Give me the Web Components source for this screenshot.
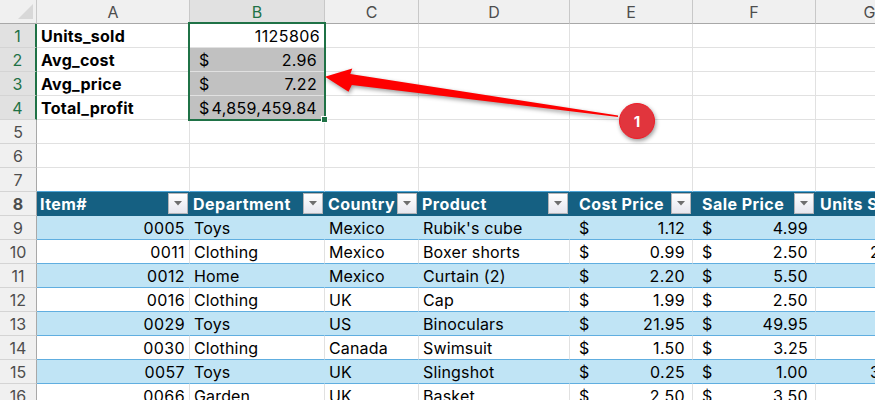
<!DOCTYPE html>
<html>
<head>
<meta charset="utf-8">
<style>
  html, body { margin: 0; background: #fff; overflow: hidden; }
</style>
</head>
<body>
<xl-sheet></xl-sheet>
<script>
const COLS = "37px 153px 135px 94px 151px 123px 123px 108px"
const FONT = `Inter, "Noto Sans", "Liberation Sans", sans-serif`

class XlCell extends HTMLElement {
  constructor() {
    super()
    this.attachShadow({ mode: "open" }).innerHTML = `
      <style>
        :host {
          display: flex;
          align-items: center;
          box-sizing: border-box;
          min-width: 0;
          height: 24px;
          padding: 1px 4px 0 4px;
          border-right: 1px solid var(--v-line, #e1e1e1);
          border-bottom: 1px solid var(--h-line, #e1e1e1);
          background: var(--fill, transparent);
          color: var(--ink, #000);
          letter-spacing: .15px;
          white-space: nowrap;
          overflow: hidden;
        }
        :host([bold]) { font-weight: 700; letter-spacing: .25px; }
        :host([right]) { justify-content: flex-end; letter-spacing: .4px; }
        :host([money]) { justify-content: space-between; padding: 1px 7px 0 9px; letter-spacing: .3px; }
        :host([shade]) { background: #c1c1c1; }
        :host([filter]) { justify-content: space-between; padding: 0 0 0 3px; letter-spacing: .45px; }
        :host([filter][wide]) { padding-left: 9px; }
      </style>
      <slot></slot>
    `
  }
}

class XlHead extends HTMLElement {
  constructor() {
    super()
    this.attachShadow({ mode: "open" }).innerHTML = `
      <style>
        :host {
          display: flex;
          align-items: center;
          justify-content: center;
          box-sizing: border-box;
          height: 24px;
          padding-top: 1px;
          background: #f0f0f0;
          color: #4d4d4d;
          border-right: 1px solid #c8c8c8;
          border-bottom: 1px solid #c8c8c8;
        }
        :host([on]) { background: #e1e1e1; color: #1f7246; }
        :host([side]) { border-right-color: #a8a8a8; border-bottom-color: #d4d4d4; }
        :host([side][on]) { border-right: 2px solid #1f7246; }
        :host([top]) { border-bottom-color: #a8a8a8; }
      </style>
      <slot></slot>
    `
  }
}

class XlFilter extends HTMLElement {
  constructor() {
    super()
    this.attachShadow({ mode: "open" }).innerHTML = `
      <style>
        :host {
          display: flex;
          align-items: center;
          justify-content: center;
          flex: none;
          box-sizing: border-box;
          width: 20px;
          height: 21px;
          margin-right: 1px;
          background: linear-gradient(#ffffff, #e6e6ee);
          border: 1px solid #b4b4b8;
        }
      </style>
      <svg width="8" height="5" viewBox="0 0 8 5"><path d="M0 0H8L4 4.5Z" fill="#6e6e6e"/></svg>
    `
  }
}

class XlRow extends HTMLElement {
  constructor() {
    super()
    this.attachShadow({ mode: "open" }).innerHTML = `
      <style>
        :host {
          display: grid;
          grid-template-columns: ${COLS};
          height: 24px;
        }
        :host([kind="edge"]) { --h-line: #4ea5d8; }
        :host([kind="title"]) { --fill: #156082; --ink: #fff; --v-line: #156082; --h-line: #156082; font-weight: 700; }
        :host([kind="band"]) { --fill: #c0e4f5; --v-line: #c0e4f5; --h-line: #60aee0; }
        :host([kind="plain"]) { --h-line: #60aee0; }
      </style>
      <slot></slot>
    `
  }
}

class XlSelection extends HTMLElement {
  constructor() {
    super()
    this.attachShadow({ mode: "open" }).innerHTML = `
      <style>
        :host {
          position: absolute;
          left: 188px;
          top: 22px;
          width: 138px;
          height: 99px;
          box-sizing: border-box;
          border: 2px solid #1f7246;
        }
        i {
          position: absolute;
          right: -4px;
          bottom: -4px;
          width: 5px;
          height: 5px;
          background: #1f7246;
          border: 1px solid #fff;
        }
      </style>
      <i></i>
    `
  }
}

class XlArrow extends HTMLElement {
  constructor() {
    super()
    this.attachShadow({ mode: "open" }).innerHTML = `
      <style>
        :host { position: absolute; left: 320px; top: 60px; width: 310px; height: 70px; }
        svg { display: block; overflow: visible; filter: drop-shadow(1px 2px 2px rgba(0,0,0,.4)); }
      </style>
      <svg width="310" height="70" viewBox="320 60 310 70">
        <path d="M325 76.7 352.3 68.5 350.3 74 618 115.5 618 117 351.8 85 348.5 91.8Z" fill="#fe0000"/>
      </svg>
    `
  }
}

class XlBadge extends HTMLElement {
  constructor() {
    super()
    this.attachShadow({ mode: "open" }).innerHTML = `
      <style>
        :host {
          position: absolute;
          left: 619px;
          top: 103px;
          width: 36px;
          height: 36px;
          box-sizing: border-box;
          display: flex;
          align-items: center;
          justify-content: center;
          border-radius: 50%;
          border: 1.5px solid #f01e28;
          background: #e1353d;
          color: #fff;
          font: 700 15px ${FONT};
          box-shadow: 1px 2px 4px rgba(0,0,0,.4);
        }
      </style>
      <slot></slot>
    `
  }
}

class XlSheet extends HTMLElement {
  constructor() {
    super()
    this.attachShadow({ mode: "open" }).innerHTML = `
      <style>
        :host {
          display: block;
          position: relative;
          width: 875px;
          height: 400px;
          overflow: hidden;
          background: #fff;
          font: 400 16px ${FONT};
          color: #000;
        }
        #corner { position: absolute; left: 18px; top: 4px; }
      </style>
      <div id="rows"></div>
      <svg id="corner" width="16" height="16" viewBox="0 0 16 16"><path d="M15 0V15H0Z" fill="#d8d8d8"/></svg>
      <xl-selection></xl-selection>
      <xl-arrow></xl-arrow>
      <xl-badge>1</xl-badge>
    `
    this.rows = this.shadowRoot.getElementById("rows")
  }

  connectedCallback() {
    this.addColumnHeads()
    const top = [
      ["Units_sold", "1125806"],
      ["Avg_cost", ["$", "2.96"]],
      ["Avg_price", ["$", "7.22"]],
      ["Total_profit", ["$", "4,859,459.84"]]
    ]
    top.forEach(([label, value], i) => {
      const row = this.addRow(i + 1, "", true)
      row.append(this.cell(label, { bold: true }))
      const b = Array.isArray(value)
        ? this.money(value[0], value[1])
        : this.cell(value, { right: true })
      if (i > 0) b.setAttribute("shade", "")
      row.append(b)
      this.blanks(row, 5)
    })
    for (let n = 5; n <= 7; n++) {
      this.blanks(this.addRow(n, n === 7 ? "edge" : ""), 7)
    }

    const title = this.addRow(8, "title")
    for (const name of ["Item#", "Department", "Country", "Product", "Cost Price", "Sale Price"]) {
      const flags = name.endsWith("Price") ? { filter: true, wide: true } : { filter: true }
      const c = this.cell(name, flags)
      c.append(document.createElement("xl-filter"))
      title.append(c)
    }
    const last = this.cell("Units S")
    last.style.letterSpacing = ".45px"
    last.style.paddingTop = "0"
    title.append(last)

    const data = [
      ["0005", "Toys", "Mexico", "Rubik's cube", "1.12", "4.99"],
      ["0011", "Clothing", "Mexico", "Boxer shorts", "0.99", "2.50", "2"],
      ["0012", "Home", "Mexico", "Curtain (2)", "2.20", "5.50"],
      ["0016", "Clothing", "UK", "Cap", "1.99", "2.50"],
      ["0029", "Toys", "US", "Binoculars", "21.95", "49.95"],
      ["0030", "Clothing", "Canada", "Swimsuit", "1.50", "3.25"],
      ["0057", "Toys", "UK", "Slingshot", "0.25", "1.00", "3"],
      ["0066", "Garden", "UK", "Basket", "2.50", "3.50"]
    ]
    data.forEach((d, i) => {
      const row = this.addRow(9 + i, i % 2 ? "plain" : "band")
      row.append(
        this.cell(d[0], { right: true }),
        this.cell(d[1]),
        this.cell(d[2]),
        this.cell(d[3]),
        this.money("$", d[4]),
        this.money("$", d[5])
      )
      const g = this.cell(d[6] || "")
      g.style.paddingLeft = "54px"
      row.append(g)
    })
  }

  addColumnHeads() {
    const row = document.createElement("xl-row")
    for (const name of ["", "A", "B", "C", "D", "E", "F", "G"]) {
      const h = document.createElement("xl-head")
      h.setAttribute("top", "")
      if (name === "B") h.setAttribute("on", "")
      h.textContent = name
      row.append(h)
    }
    this.rows.append(row)
  }

  addRow(n, kind, selected) {
    const row = document.createElement("xl-row")
    if (kind) row.setAttribute("kind", kind)
    const h = document.createElement("xl-head")
    h.setAttribute("side", "")
    if (selected) h.setAttribute("on", "")
    h.textContent = n
    row.append(h)
    this.rows.append(row)
    return row
  }

  cell(text, flags = {}) {
    const c = document.createElement("xl-cell")
    for (const key in flags) c.setAttribute(key, "")
    c.append(text)
    return c
  }

  money(sign, value) {
    const c = document.createElement("xl-cell")
    c.setAttribute("money", "")
    const a = document.createElement("span")
    const b = document.createElement("span")
    a.textContent = sign
    b.textContent = value
    c.append(a, b)
    return c
  }

  blanks(row, count) {
    for (let i = 0; i < count; i++) row.append(document.createElement("xl-cell"))
  }
}

customElements.define("xl-cell", XlCell)
customElements.define("xl-head", XlHead)
customElements.define("xl-filter", XlFilter)
customElements.define("xl-row", XlRow)
customElements.define("xl-selection", XlSelection)
customElements.define("xl-arrow", XlArrow)
customElements.define("xl-badge", XlBadge)
customElements.define("xl-sheet", XlSheet)
</script>
</body>
</html>
